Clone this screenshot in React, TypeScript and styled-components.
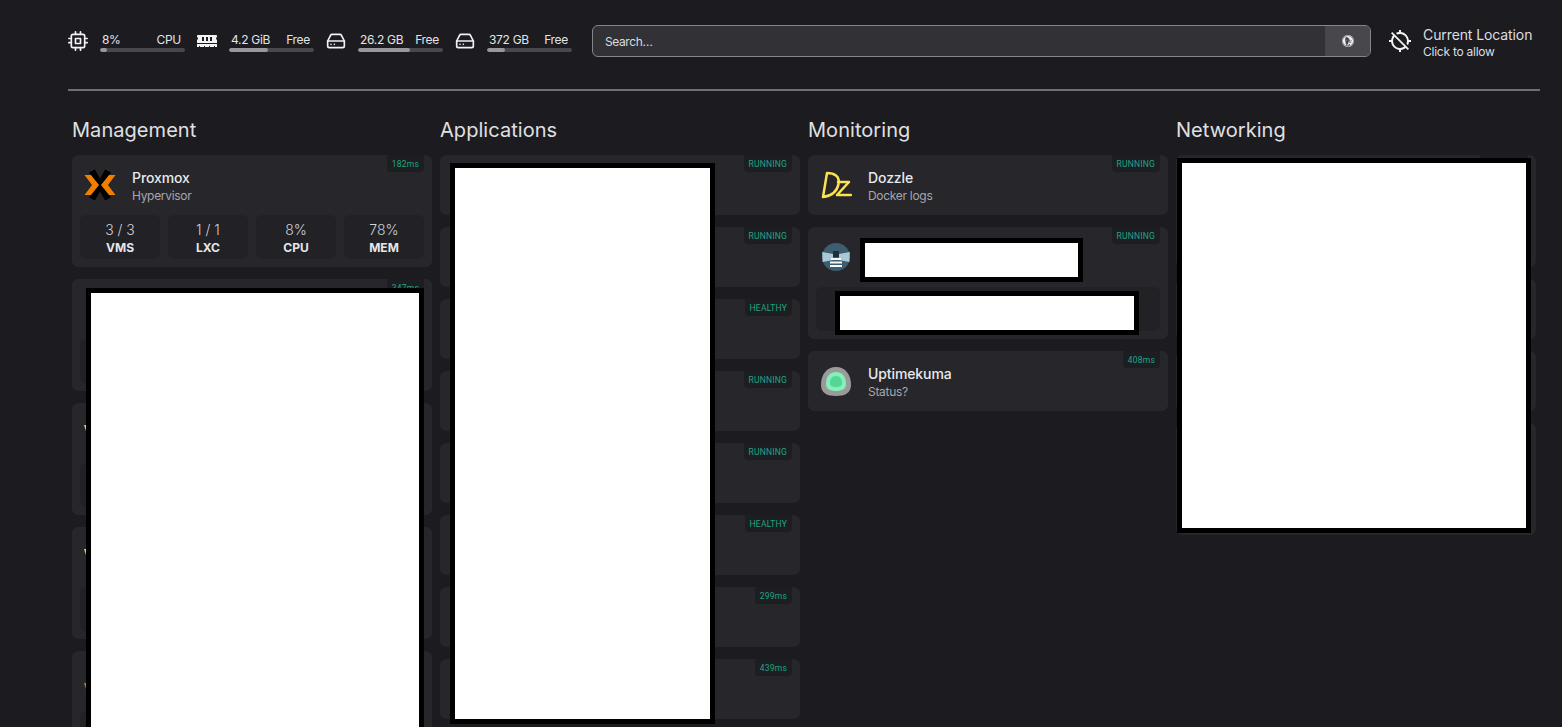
import React from "react";
import styled, { createGlobalStyle } from "styled-components";
import { FiCpu, FiHardDrive } from "react-icons/fi";
import { FaMemory } from "react-icons/fa";
import { MdGpsOff } from "react-icons/md";
import { SiDuckduckgo } from "react-icons/si";

const Global = createGlobalStyle`
  html, body { margin: 0; padding: 0; background: #1b1b20; height: 100%; overflow: hidden; }
  #root { height: 100%; }
  * { box-sizing: border-box; }
  body { font-family: "Inter", "Noto Sans", sans-serif; color: #e8e8ea; }
`;

const Page = styled.div`
  height: 727px;
  overflow: hidden;
  padding: 0 22px 0 68px;
`;

const Header = styled.header`
  display: flex;
  align-items: flex-start;
  height: 91px;
  border-bottom: 2px solid #6f6f74;
  padding-top: 25px;
`;

const Resources = styled.div`
  display: flex;
  gap: 12px;
  width: 524px;
  height: 32px;
  flex: none;
`;

const Resource = styled.div`
  display: flex;
  align-items: center;
  gap: 12px;
  width: 117px;
  flex: none;
  svg { flex: none; color: #f2f2f4; font-size: 20px; }
`;

const ResourceBody = styled.div`
  width: 85px;
  flex: none;
`;

const ResourceText = styled.div`
  display: flex;
  justify-content: space-between;
  padding: 2px 4px 0 2px;
  font-size: 12px;
  line-height: 14px;
  letter-spacing: -0.3px;
  color: #e4e4e6;
`;

const Bar = styled.div`
  height: 4px;
  margin-top: 1px;
  border-radius: 2px;
  background: #47474c;
  overflow: hidden;
`;

const BarFill = styled.div`
  height: 100%;
  border-radius: 2px;
  background: #98989c;
`;

const Search = styled.div`
  display: flex;
  width: 779px;
  height: 32px;
  margin-right: 17px;
  border: 1px solid #86868a;
  border-radius: 6px;
  background: #313136;
  overflow: hidden;
  flex: none;
`;

const SearchText = styled.div`
  flex: 1;
  padding-left: 12px;
  font-size: 12px;
  line-height: 31px;
  letter-spacing: -0.4px;
  color: #dcdcde;
`;

const SearchButton = styled.div`
  display: flex;
  width: 45px;
  align-items: center;
  justify-content: center;
  background: #47474c;
  color: #f0f0f2;
  font-size: 12px;
`;

const Location = styled.div`
  display: flex;
  align-items: center;
  gap: 11px;
  height: 32px;
  flex: none;
  white-space: nowrap;
  svg { font-size: 24px; color: #f2f2f4; }
`;

const LocationTitle = styled.div`
  margin-top: 3px;
  font-size: 14px;
  line-height: 19px;
  letter-spacing: -0.1px;
  color: #dedee0;
`;

const LocationSub = styled.div`
  font-size: 12px;
  line-height: 16px;
  letter-spacing: -0.25px;
  color: #dedee0;
`;

const Columns = styled.main`
  display: grid;
  grid-template-columns: repeat(4, 360px);
  gap: 8px;
  padding: 24px 4px 0;
`;

const Title = styled.h2`
  margin: 0 0 10px;
  font-size: 20px;
  line-height: 30px;
  font-weight: 400;
  letter-spacing: 0.05px;
  color: #e0e0e2;
`;

const CardList = styled.div`
  position: relative;
  display: flex;
  flex-direction: column;
  gap: 12px;
`;

const Card = styled.article<{ $clipEnd?: boolean }>`
  position: relative;
  border-radius: 6px;
  background: #26262b;
  ${(p) => (p.$clipEnd ? "margin-bottom: -2px;" : "")}
`;

const CardHead = styled.div`
  display: flex;
  align-items: center;
  gap: 16px;
  height: 60px;
  padding: 0 12px;
`;

const LogoSlot = styled.div`
  width: 32px;
  height: 32px;
  flex: none;
  svg { display: block; width: 32px; height: 32px; }
`;

const CardText = styled.div`
  margin-top: 4px;
`;

const Name = styled.div`
  font-size: 14px;
  line-height: 18px;
  font-weight: 500;
  letter-spacing: -0.1px;
  color: #e9e9eb;
`;

const Description = styled.div`
  font-size: 12px;
  line-height: 18px;
  letter-spacing: -0.3px;
  color: #a7a7ab;
`;

const Badge = styled.div`
  position: absolute;
  top: 0;
  right: 8px;
  height: 17px;
  padding: 0 5px;
  border-radius: 0 0 4px 4px;
  background: #1d1e22;
  color: #1fa583;
  font-family: "Roboto", sans-serif;
  font-size: 8.5px;
  font-weight: 400;
  line-height: 18px;
  letter-spacing: 0.2px;
`;

const Stats = styled.div`
  display: flex;
  gap: 8px;
  padding: 0 8px 8px;
`;

const Stat = styled.div`
  flex: 1;
  height: 44px;
  padding-top: 6px;
  border-radius: 6px;
  background: #212126;
  text-align: center;
`;

const StatValue = styled.div`
  font-size: 14px;
  line-height: 17px;
  font-weight: 300;
  color: #d2d2d4;
`;

const StatLabel = styled.div`
  margin-top: 1px;
  font-size: 12px;
  line-height: 17px;
  font-weight: 700;
  color: #e6e6e8;
`;

const Redaction = styled.div<{ $x: number; $y: number; $w: number; $h: number }>`
  position: absolute;
  left: ${(p) => p.$x}px;
  top: ${(p) => p.$y}px;
  width: ${(p) => p.$w}px;
  height: ${(p) => p.$h}px;
  border: 5px solid #000;
  background: #fff;
`;

const ProxmoxLogo = () => (
  <svg viewBox="0 0 32 32">
    <path d="M8 2 L24 30 M24 2 L8 30" stroke="#000" strokeWidth="6.5" fill="none" />
    <path d="M0.5 6 L7 6 L15 16 L7 26 L0.5 26 L8 16 Z M31.5 6 L25 6 L17 16 L25 26 L31.5 26 L24 16 Z" fill="#f07f00" />
  </svg>
);

const DozzleLogo = () => (
  <svg viewBox="0 0 32 32" fill="none" stroke="#fde24f" strokeWidth="2.5" strokeLinejoin="round" strokeLinecap="round">
    <path d="M7 4 C14 4 20 7 18.5 15 C17 23 11 27 3 28 Z" />
    <path d="M18 13 L29 13 L17 26 L31 26" />
  </svg>
);

const WatchLogo = () => (
  <svg viewBox="0 0 32 32">
    <circle cx="16" cy="16" r="14" fill="#3c5e70" />
    <path d="M2.2 11 L13 13 L13 19 L2.6 21 Z M29.8 11 L19 13 L19 19 L29.4 21 Z" fill="#a9c9d6" />
    <rect x="13" y="10" width="6" height="6" fill="#1d2f38" />
    <rect x="11" y="17" width="10" height="2" fill="#f4f6f7" />
    <rect x="10" y="20.5" width="12" height="2" fill="#f4f6f7" />
    <rect x="10" y="24" width="12" height="2" fill="#f4f6f7" />
  </svg>
);

const KumaLogo = () => (
  <svg viewBox="0 0 32 32">
    <path d="M16 2 C25 2 31 9 31 20 C31 28 25 31 16 31 C7 31 1 28 1 20 C1 9 7 2 16 2 Z" fill="#9a9a9a" />
    <path d="M16 7 C23 7 26 12 26 19 C26 24 22 26 16 26 C10 26 6 24 6 19 C6 12 9 7 16 7 Z" fill="#84efb8" />
    <path d="M16 11 C20 11 22 14 22 18 C22 21 20 22 16 22 C12 22 10 21 10 18 C10 14 12 11 16 11 Z" fill="#55d596" />
  </svg>
);

const SliverLogo = ({ color, y }: { color: string; y: number }) => (
  <svg viewBox="0 0 32 32">
    <path d={`M0 ${y - 3} L2 ${y - 3} L3 ${y + 3} L2 ${y + 3} Z`} fill={color} />
  </svg>
);

type StatItem = { value?: string; label?: string };

const blank: StatItem[] = [{}, {}, {}, {}];

type Service = {
  badge: string;
  logo?: React.ReactNode;
  name?: string;
  description?: string;
  stats?: StatItem[];
  clipEnd?: boolean;
};

const resources = [
  { icon: <FiCpu />, value: "8%", label: "CPU", fill: 8 },
  { icon: <FaMemory />, value: "4.2 GiB", label: "Free", fill: 46 },
  { icon: <FiHardDrive />, value: "26.2 GB", label: "Free", fill: 61 },
  { icon: <FiHardDrive />, value: "372 GB", label: "Free", fill: 21 },
];

const columns: { title: string; services: Service[]; redactions: [number, number, number, number][] }[] = [
  {
    title: "Management",
    redactions: [[14, 133, 338, 470]],
    services: [
      {
        badge: "182ms",
        logo: <ProxmoxLogo />,
        name: "Proxmox",
        description: "Hypervisor",
        stats: [
          { value: "3 / 3", label: "VMS" },
          { value: "1 / 1", label: "LXC" },
          { value: "8%", label: "CPU" },
          { value: "78%", label: "MEM" },
        ],
      },
      { badge: "347ms", stats: blank },
      { badge: "", logo: <SliverLogo color="#d9d94a" y={11} />, stats: blank },
      { badge: "", logo: <SliverLogo color="#d9d94a" y={11} />, stats: blank },
      { badge: "", logo: <SliverLogo color="#e57000" y={21} />, stats: blank },
    ],
  },
  {
    title: "Applications",
    redactions: [[10, 8, 265, 561]],
    services: ["RUNNING", "RUNNING", "HEALTHY", "RUNNING", "RUNNING", "HEALTHY", "299ms", "439ms"].map((badge) => ({ badge })),
  },
  {
    title: "Monitoring",
    redactions: [
      [52, 83, 223, 44],
      [27, 136, 304, 44],
    ],
    services: [
      { badge: "RUNNING", logo: <DozzleLogo />, name: "Dozzle", description: "Docker logs" },
      { badge: "RUNNING", logo: <WatchLogo />, stats: [{}] },
      { badge: "408ms", logo: <KumaLogo />, name: "Uptimekuma", description: "Status?" },
    ],
  },
  {
    title: "Networking",
    redactions: [[1, 3, 354, 375]],
    services: [
      { badge: "RUNNING", stats: blank },
      { badge: "" },
      { badge: "" },
      { badge: "", stats: blank, clipEnd: true },
    ],
  },
];

export default function App() {
  return (
    <Page>
      <Global />
      <Header>
        <Resources>
          {resources.map((r, i) => (
            <Resource key={i}>
              {r.icon}
              <ResourceBody>
                <ResourceText>
                  <span>{r.value}</span>
                  <span>{r.label}</span>
                </ResourceText>
                <Bar>
                  <BarFill style={{ width: `${r.fill}%` }} />
                </Bar>
              </ResourceBody>
            </Resource>
          ))}
        </Resources>
        <Search>
          <SearchText>Search…</SearchText>
          <SearchButton>
            <SiDuckduckgo />
          </SearchButton>
        </Search>
        <Location>
          <MdGpsOff />
          <div>
            <LocationTitle>Current Location</LocationTitle>
            <LocationSub>Click to allow</LocationSub>
          </div>
        </Location>
      </Header>
      <Columns>
        {columns.map((column) => (
          <section key={column.title}>
            <Title>{column.title}</Title>
            <CardList>
              {column.services.map((s, i) => (
                <Card key={i} $clipEnd={s.clipEnd}>
                  {s.badge && <Badge>{s.badge}</Badge>}
                  <CardHead>
                    <LogoSlot>{s.logo}</LogoSlot>
                    {s.name && (
                      <CardText>
                        <Name>{s.name}</Name>
                        <Description>{s.description}</Description>
                      </CardText>
                    )}
                  </CardHead>
                  {s.stats && (
                    <Stats>
                      {s.stats.map((st, k) => (
                        <Stat key={k}>
                          {st.value && <StatValue>{st.value}</StatValue>}
                          {st.label && <StatLabel>{st.label}</StatLabel>}
                        </Stat>
                      ))}
                    </Stats>
                  )}
                </Card>
              ))}
              {column.redactions.map(([x, y, w, h], i) => (
                <Redaction key={i} $x={x} $y={y} $w={w} $h={h} />
              ))}
            </CardList>
          </section>
        ))}
      </Columns>
    </Page>
  );
}
